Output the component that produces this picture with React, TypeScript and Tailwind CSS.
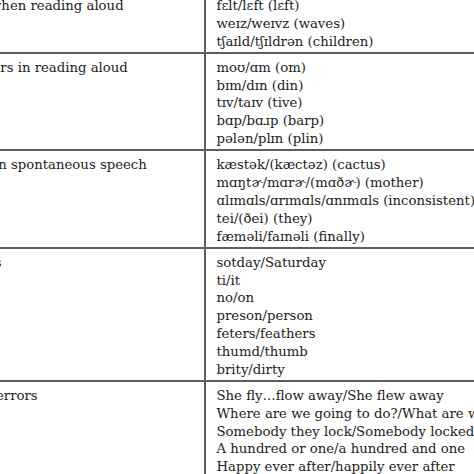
import React from 'react';

interface Row {
    label: string;
    labelShift: string;
    lines: string[];
}

const rows: Row[] = [
    {
        label: 'when reading aloud',
        labelShift: '-ml-[10px]',
        lines: ['fɛlt/lɛft (lɛft)', 'weɪz/weɪvz (waves)', 'tʃaɪld/tʃɪldrən (children)'],
    },
    {
        label: 'rors in reading aloud',
        labelShift: '-ml-[14px]',
        lines: ['moʊ/ɑm (om)', 'bɪm/dɪn (din)', 'tɪv/taɪv (tive)', 'bɑp/bɑɹp (barp)', 'pələn/plɪn (plin)'],
    },
    {
        label: 'in spontaneous speech',
        labelShift: '-ml-[6px]',
        lines: [
            'kæstək/(kæctəz) (cactus)',
            'mɑŋtɚ/mɑrɚ/(mɑðɚ) (mother)',
            'ɑlɪmɑls/ɑrɪmɑls/ɑnɪmɑls (inconsistent)',
            'tei/(ðei) (they)',
            'fæməli/faɪnəli (finally)',
        ],
    },
    {
        label: 'errors',
        labelShift: '-ml-[40px]',
        lines: [
            'sotday/Saturday',
            'ti/it',
            'no/on',
            'preson/person',
            'feters/feathers',
            'thumd/thumb',
            'brity/dirty',
        ],
    },
    {
        label: 'errors',
        labelShift: '-ml-[4px]',
        lines: [
            'She fly…flow away/She flew away',
            'Where are we going to do?/What are we going to do?',
            'Somebody they lock/Somebody locked them',
            'A hundred or one/a hundred and one',
            'Happy ever after/happily ever after',
        ],
    },
];

const App: React.FC = () => {
    return (
        <div
            className="w-[474px] h-[474px] overflow-hidden bg-white text-[#1c1c1c] text-[13.25px] leading-[17.8px]"
            style={{ fontFamily: '"DejaVu Serif", "Liberation Serif", serif' }}
        >
            <div className="-mt-[8px] w-[600px]">
                {rows.map((row, i) => (
                    <div key={i} className="flex border-b-2 border-[#5e5e5e]">
                        <div className="w-[206px] shrink-0 overflow-hidden border-r-2 border-[#5e5e5e] pt-[5px] pb-[1.5px]">
                            <div className={`whitespace-nowrap ${row.labelShift}`}>{row.label}</div>
                        </div>
                        <div className="flex-1 pl-[10.5px] pt-[5px] pb-[1.5px] whitespace-nowrap">
                            {row.lines.map((line, j) => (
                                <div key={j}>{line}</div>
                            ))}
                        </div>
                    </div>
                ))}
            </div>
        </div>
    );
};

export default App;
